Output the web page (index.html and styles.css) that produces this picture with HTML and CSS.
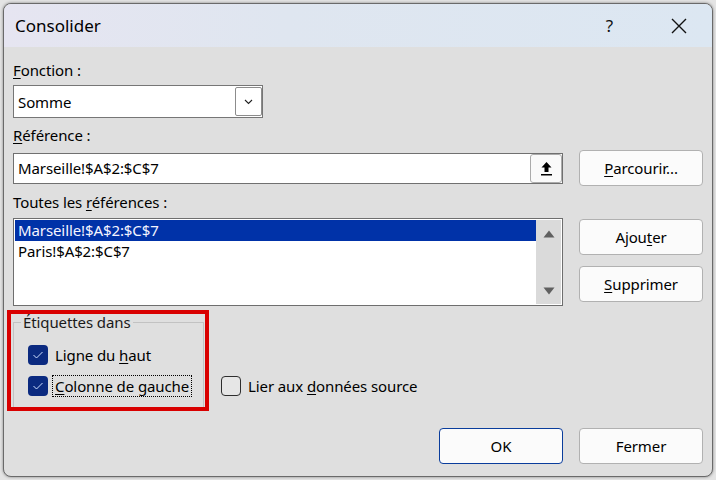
FILE: index.html
```html
<!DOCTYPE html>
<html lang="fr">
<head>
    <meta charset="UTF-8">
    <title>Consolider</title>
    <link rel="stylesheet" href="styles.css">
</head>
<body>
    <div class="dialog">
        <!-- Barre de titre -->
        <div class="titlebar">
            <span class="title">Consolider</span>
            <span class="help">?</span>
            <span class="close">
                <svg width="16" height="16" viewBox="0 0 16 16"><path d="M1 1 L15 15 M15 1 L1 15" stroke="#111" stroke-width="1.4" fill="none"/></svg>
            </span>
        </div>

        <div class="content">
            <div class="lbl"><u>F</u>onction :</div>
            <div class="select">
                <span>Somme</span>
                <span class="drop">
                    <svg width="9" height="6" viewBox="0 0 9 6"><path d="M1 1 L4.5 4.5 L8 1" stroke="#222" stroke-width="1.1" fill="none"/></svg>
                </span>
            </div>

            <div class="lbl lbl-ref"><u>R</u>éférence :</div>
            <div class="row">
                <div class="input">
                    <span>Marseille!$A$2:$C$7</span>
                    <span class="collapse">
                        <svg width="11" height="15" viewBox="0 0 11 15"><path d="M5.5 1 L0.5 6.5 H3.5 V11 H7.5 V6.5 H10.5 Z" fill="#000"/><rect x="0" y="13" width="11" height="1.5" fill="#000"/></svg>
                    </span>
                </div>
                <button class="btn btn-ref"><u>P</u>arcourir...</button>
            </div>

            <div class="lbl lbl-all">Toutes les <u>r</u>éférences :</div>
            <div class="row row-list">
                <div class="list">
                    <div class="items">
                        <div class="item selected">Marseille!$A$2:$C$7</div>
                        <div class="item">Paris!$A$2:$C$7</div>
                    </div>
                    <div class="scrollbar">
                        <svg width="12" height="8" viewBox="0 0 12 8"><path d="M6 0.5 L11.5 7.5 H0.5 Z" fill="#606060"/></svg>
                        <svg width="12" height="8" viewBox="0 0 12 8"><path d="M0.5 0.5 H11.5 L6 7.5 Z" fill="#606060"/></svg>
                    </div>
                </div>
                <div class="side-buttons">
                    <button class="btn">Ajou<u>t</u>er</button>
                    <button class="btn"><u>S</u>upprimer</button>
                </div>
            </div>

            <div class="options">
                <div class="group-wrap">
                    <fieldset class="group">
                        <legend>Étiquettes dans</legend>
                        <div class="option">
                            <span class="check checked">
                                <svg width="20" height="20" viewBox="0 0 20 20"><path d="M5.5 10 L8.5 13 L14.5 7" stroke="#cfe0ff" stroke-width="1" fill="none"/></svg>
                            </span>
                            <span class="opt-text">Ligne du <u>h</u>aut</span>
                        </div>
                        <div class="option option-2">
                            <span class="check checked">
                                <svg width="20" height="20" viewBox="0 0 20 20"><path d="M5.5 10 L8.5 13 L14.5 7" stroke="#cfe0ff" stroke-width="1" fill="none"/></svg>
                            </span>
                            <span class="opt-text focused"><u>C</u>olonne de gauche</span>
                        </div>
                    </fieldset>
                    <!-- cadre rouge d'annotation -->
                    <div class="highlight"></div>
                </div>
                <div class="option option-link">
                    <span class="check"></span>
                    <span class="opt-text">Lier aux <u>d</u>onnées source</span>
                </div>
            </div>

            <div class="footer">
                <button class="btn btn-ok">OK</button>
                <button class="btn">Fermer</button>
            </div>
        </div>
    </div>
</body>
</html>
```

FILE: styles.css
```css
body {
    margin: 0;
    background-color: #e4e4e4;
    font-family: "Noto Sans", sans-serif;
    font-size: 15px;
    letter-spacing: -0.1px;
    color: #000;
}
u {
    text-decoration-thickness: 1px;
    text-underline-offset: 2px;
}
.dialog {
    margin: 3px;
    width: 710px;
    height: 474px;
    box-sizing: border-box;
    border: 1px solid #6a6a6a;
    border-radius: 8px;
    overflow: hidden;
    background-color: #dfdfdf;
    box-shadow: 0 0 3px rgba(0, 0, 0, 0.45);
    display: flex;
    flex-direction: column;
}
.titlebar {
    height: 43px;
    display: flex;
    align-items: center;
    padding-left: 11px;
    background: linear-gradient(90deg, #e6e5f1 0%, #dfe6f0 40%, #dce7f2 100%);
}
.title {
    font-size: 17px;
    letter-spacing: 0;
    flex: 1;
}
.help {
    font-size: 17px;
    color: #111;
    margin-right: 58px;
}
.close {
    display: flex;
    margin-right: 25px;
}
.content {
    flex: 1;
    display: flex;
    flex-direction: column;
    padding: 13px 9px 12px 9px;
}
.lbl {
    line-height: 20px;
}
.lbl-ref {
    margin-top: 7px;
}
.lbl-all {
    margin-top: 6px;
}
.select {
    margin-top: 5px;
    width: 250px;
    height: 33px;
    box-sizing: border-box;
    border: 1px solid #767676;
    background-color: #fff;
    display: flex;
    align-items: center;
    padding-left: 4px;
}
.select span:first-child {
    flex: 1;
}
.drop {
    width: 27px;
    height: 29px;
    box-sizing: border-box;
    border: 1px solid #8c8c8c;
    border-radius: 2px;
    display: flex;
    align-items: center;
    justify-content: center;
}
.row {
    display: flex;
    align-items: center;
    gap: 16px;
    margin-top: 5px;
}
.input {
    width: 550px;
    height: 31px;
    box-sizing: border-box;
    border: 1px solid #707070;
    background-color: #fff;
    display: flex;
    align-items: center;
    padding-left: 4px;
}
.input span:first-child {
    flex: 1;
}
.collapse {
    width: 32px;
    height: 29px;
    box-sizing: border-box;
    border: 1px solid #ababab;
    border-radius: 3px;
    background-color: #fafafa;
    display: flex;
    align-items: center;
    justify-content: center;
}
.btn {
    width: 124px;
    height: 36px;
    box-sizing: border-box;
    border: 1px solid #b1b1b1;
    border-radius: 4px;
    background-color: #fbfbfb;
    font-family: "Noto Sans", sans-serif;
    font-size: 15px;
    letter-spacing: -0.1px;
    color: #000;
    padding: 0;
}
.row-list {
    align-items: flex-start;
    margin-top: 6px;
}
.list {
    width: 550px;
    height: 88px;
    box-sizing: border-box;
    border: 1px solid #6e6e6e;
    background-color: #fff;
    padding: 1px;
    display: flex;
}
.items {
    flex: 1;
}
.item {
    height: 21px;
    line-height: 21px;
    padding-left: 3px;
}
.item.selected {
    background-color: #0032a8;
    color: #f4f4ff;
}
.scrollbar {
    width: 25px;
    background-color: #dadada;
    display: flex;
    flex-direction: column;
    align-items: center;
    justify-content: space-between;
    padding: 10px 0 9px 0;
}
.side-buttons {
    display: flex;
    flex-direction: column;
    gap: 11px;
    margin-top: 1px;
}
.options {
    display: flex;
    align-items: flex-end;
    margin-top: 6px;
}
.group-wrap {
    position: relative;
}
.group {
    width: 191px;
    box-sizing: border-box;
    margin: 0;
    border: 1px solid #c2c2c2;
    padding: 12px 0 10px 7px;
}
.group legend {
    padding: 0 2px;
    line-height: 20px;
    color: #1a1a1a;
}
.highlight {
    position: absolute;
    left: -6px;
    top: -2px;
    width: 202px;
    height: 101px;
    box-sizing: border-box;
    border: 4px solid #d90000;
}
.option {
    display: flex;
    align-items: center;
    margin-left: 7px;
}
.option-2 {
    margin-top: 9px;
}
.option-link {
    margin-left: 17px;
    margin-bottom: 11px;
}
.check {
    width: 20px;
    height: 20px;
    box-sizing: border-box;
    border: 1.5px solid #2e2e2e;
    border-radius: 4px;
    background-color: #e6e6e6;
}
.check.checked {
    border: none;
    background-color: #0b2a80;
}
.check svg {
    display: block;
}
.opt-text {
    margin-left: 4px;
    padding: 0 2px;
    line-height: 20px;
    border: 1px dotted transparent;
}
.opt-text.focused {
    border-color: #000;
}
.footer {
    margin-top: auto;
    display: flex;
    justify-content: flex-end;
    gap: 16px;
}
.btn-ok {
    border-color: #0a3d9c;
}
```
